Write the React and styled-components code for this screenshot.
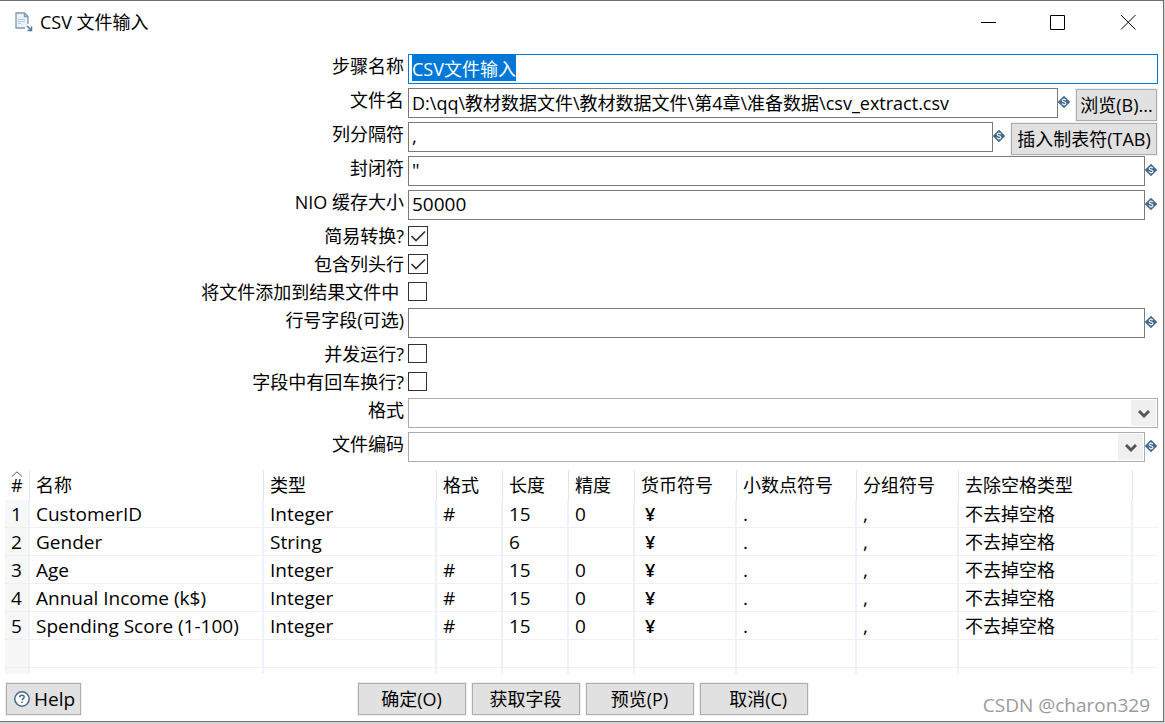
import React, { useEffect, useRef } from 'react';
import styled, { createGlobalStyle, css } from 'styled-components';

const columns = [
  { title: '#', width: 25 },
  { title: '名称', width: 234 },
  { title: '类型', width: 173 },
  { title: '格式', width: 66 },
  { title: '长度', width: 66 },
  { title: '精度', width: 66 },
  { title: '货币符号', width: 102 },
  { title: '小数点符号', width: 120 },
  { title: '分组符号', width: 102 },
  { title: '去除空格类型', width: 174 },
  { title: '', width: 0 },
];

const fields = [
  ['1', 'CustomerID', 'Integer', '#', '15', '0', '¥', '.', ',', '不去掉空格', ''],
  ['2', 'Gender', 'String', '', '6', '', '¥', '.', ',', '不去掉空格', ''],
  ['3', 'Age', 'Integer', '#', '15', '0', '¥', '.', ',', '不去掉空格', ''],
  ['4', 'Annual Income (k$)', 'Integer', '#', '15', '0', '¥', '.', ',', '不去掉空格', ''],
  ['5', 'Spending Score (1-100)', 'Integer', '#', '15', '0', '¥', '.', ',', '不去掉空格', ''],
  ['', '', '', '', '', '', '', '', '', '', ''],
];

// Open Sans runs a little narrow beside the CJK face
const isLatin = (text) => /^[ -~]*$/.test(text);

const VariableIcon = () => (
  <IconSlot>
    <svg width="12" height="12" viewBox="0 0 12 12" aria-hidden="true">
      <path d="M6 .7 11.300 6 6 11.300.7 6Z" fill="#44698a" stroke="#44698a" strokeWidth="1.400" strokeLinejoin="round" />
      <path
        d="M7.900 4.300C7.500 3.500 6.900 3.300 6 3.300c-1.100 0-1.800.5-1.800 1.300C4.200 6.300 7.900 5.600 7.900 7.400c0 .8-.8 1.300-1.900 1.300-1 0-1.700-.3-2.100-1.100M6 2.200v1M6 8.700v1"
        fill="none"
        stroke="#dfe8ef"
        strokeWidth="1.200"
      />
    </svg>
  </IconSlot>
);

const FileIcon = () => (
  <svg width="18" height="20" viewBox="0 0 18 20" aria-hidden="true">
    <path d="M1 1h8.500L13 4.500V11l-2 5H1Z" fill="#eaf1f7" />
    <path d="M10 16H1V1h8.500L13 4.500V12M9.500 1v3.500H13" fill="none" stroke="#7c9ab2" strokeWidth="1.300" />
    <path d="M3 7.500h7M3 9.500h7M3 11.500h3" stroke="#b5c9d8" />
    <path d="M12 14l4 4M16.500 14.500V18.500h-4" fill="none" stroke="#55799a" strokeWidth="1.500" />
  </svg>
);

const HelpIcon = () => (
  <svg width="16" height="16" viewBox="0 0 16 16" aria-hidden="true">
    <circle cx="8" cy="8" r="7.200" fill="#fff" stroke="#44698a" strokeWidth="1.500" />
    <path
      d="M5.800 6.300c0-1.300.9-2.100 2.200-2.100s2.200.8 2.200 1.900c0 1.500-2 1.600-2 3.200M8.100 10.500v1.500"
      fill="none"
      stroke="#44698a"
      strokeWidth="1.500"
    />
  </svg>
);

function Field({ id, label, value = '', variable, button, buttonWidth, inputRef, focused }) {
  return (
    <FieldRow>
      <Label htmlFor={id}>{label}</Label>
      <Control>
        <TextInput
          id={id}
          ref={inputRef}
          defaultValue={value}
          $focused={focused}
          $latin={isLatin(value)}
          spellCheck={false}
        />
        {variable && <VariableIcon />}
        {button && (
          <SideButton type="button" $width={buttonWidth}>
            {button}
          </SideButton>
        )}
      </Control>
    </FieldRow>
  );
}

function Check({ id, label, checked }) {
  return (
    <CheckRow>
      <Label htmlFor={id}>{label}</Label>
      <CheckBox id={id} type="checkbox" defaultChecked={checked} />
    </CheckRow>
  );
}

function Choice({ id, label, variable }) {
  return (
    <FieldRow>
      <Label htmlFor={id}>{label}</Label>
      <Control>
        <SelectBox>
          <Select id={id} defaultValue="">
            <option value=""></option>
          </Select>
          <Arrow>
            <svg width="12" height="10" viewBox="0 0 12 10" aria-hidden="true">
              <path d="M1 2 6 7l5-5" fill="none" stroke="#555" strokeWidth="3" />
            </svg>
          </Arrow>
        </SelectBox>
        {variable && <VariableIcon />}
      </Control>
    </FieldRow>
  );
}

function App() {
  const nameRef = useRef();

  useEffect(() => {
    nameRef.current.focus();
    nameRef.current.select();
  }, []);

  return (
    <>
      <GlobalStyle />
      <Dialog>
        <TitleBar>
          <FileIcon />
          <Title>CSV 文件输入</Title>
          <WindowButton type="button" aria-label="最小化">
            <svg width="16" height="16" viewBox="0 0 16 16">
              <path d="M1 8.500h15" stroke="#000" />
            </svg>
          </WindowButton>
          <WindowButton type="button" aria-label="最大化">
            <svg width="16" height="16" viewBox="0 0 16 16">
              <path d="M.5 1.500h14v14H.5Z" fill="none" stroke="#000" />
            </svg>
          </WindowButton>
          <WindowButton type="button" aria-label="关闭">
            <svg width="16" height="16" viewBox="0 0 16 16">
              <path d="M1 1l14.500 14.500M15.500 1 1 15.500" stroke="#000" />
            </svg>
          </WindowButton>
        </TitleBar>

        <Form>
          <Field id="step" label="步骤名称" value="CSV文件输入" inputRef={nameRef} focused />
          <Field
            id="file"
            label="文件名"
            value="D:\qq\教材数据文件\教材数据文件\第4章\准备数据\csv_extract.csv"
            variable
            button="浏览(B)..."
            buttonWidth={81}
          />
          <Field id="delimiter" label="列分隔符" value="," variable button="插入制表符(TAB)" buttonWidth={146} />
          <Field id="enclosure" label="封闭符" value={'"'} variable />
          <Field id="buffer" label="NIO 缓存大小" value="50000" variable />
          <Check id="lazy" label="简易转换?" checked />
          <Check id="header" label="包含列头行" checked />
          <Check id="result" label={'将文件添加到结果文件中 '} />
          <Field id="rownum" label="行号字段(可选)" variable />
          <Check id="parallel" label="并发运行?" />
          <Check id="newline" label="字段中有回车换行?" />
          <Choice id="format" label="格式" />
          <Choice id="encoding" label="文件编码" variable />
        </Form>

        <TableArea>
          <Table>
            <colgroup>
              {columns.map((col, i) => (
                <Col key={i} $width={col.width} />
              ))}
            </colgroup>
            <thead>
              <tr>
                {columns.map((col, i) => (
                  <HeadCell key={i}>
                    {i === 0 && (
                      <SortMark width="12" height="6" viewBox="0 0 12 6">
                        <path d="M1 5.500 6 .8l5 4.700" fill="none" stroke="#555" />
                      </SortMark>
                    )}
                    {col.title}
                  </HeadCell>
                ))}
              </tr>
            </thead>
            <tbody>
              {fields.map((row, r) => (
                <tr key={r}>
                  {row.map((cell, c) => (
                    <Cell key={c} $index={c === 0} $latin={isLatin(cell)}>
                      {cell === '¥' ? <Yen>{cell}</Yen> : cell}
                    </Cell>
                  ))}
                </tr>
              ))}
              <tr>
                {columns.map((col, i) => (
                  <Cell key={i} $index={i === 0} $last />
                ))}
              </tr>
            </tbody>
          </Table>
        </TableArea>

        <Footer>
          <HelpButton type="button">
            <HelpIcon />
            Help
          </HelpButton>
          <Actions>
            <ActionButton type="button">确定(O)</ActionButton>
            <ActionButton type="button">获取字段</ActionButton>
            <ActionButton type="button">预览(P)</ActionButton>
            <ActionButton type="button">{'  取消(C)'}</ActionButton>
          </Actions>
          <Watermark>CSDN @charon329</Watermark>
        </Footer>
      </Dialog>
    </>
  );
}

const GlobalStyle = createGlobalStyle`
  * {
    box-sizing: border-box;
  }

  body {
    margin: 0;
    background-color: #d4d4d4;
    color: #000;
    overflow: hidden;
  }

  body, button, input, select {
    font-family: 'Open Sans', 'Noto Sans CJK SC', sans-serif;
    font-size: 18px;
    line-height: 24px;
  }
`;

const Dialog = styled.main`
  margin-right: 1px;
  border: solid #707070;
  border-width: 1px 1px 1px 0;
  background-color: #fff;
`;

const TitleBar = styled.header`
  display: flex;
  align-items: center;
  height: 53px;
  padding: 0 0 11px 15px;
`;

const Title = styled.h1`
  flex: 1;
  margin: 0;
  padding-left: 7px;
  font-size: 18px;
  font-weight: 400;
`;

const WindowButton = styled.button`
  width: 70px;
  height: 40px;
  padding: 0;
  border: 0;
  background: none;
  line-height: 0;
`;

const Form = styled.form`
  padding: 0 5px 4px 0;
`;

const FieldRow = styled.div`
  display: grid;
  grid-template-columns: 404px 1fr;
  column-gap: 4px;
  height: 34px;
`;

const CheckRow = styled(FieldRow)`
  height: 28px;
`;

const Label = styled.label`
  text-align: right;
  white-space: pre;
`;

const Control = styled.div`
  display: flex;
  align-items: flex-start;
`;

const TextInput = styled.input`
  flex: 1;
  min-width: 0;
  height: 30px;
  padding: 0 3px 2px;
  border: 1px solid ${({ $focused }) => ($focused ? '#0078d7' : '#7a7a7a')};
  outline: none;
  background-color: #fff;
  color: #000;
  font-size: ${({ $latin }) => ($latin ? '19px' : '18px')};

  &::selection {
    background-color: #0078d7;
    color: #fff;
  }
`;

const IconSlot = styled.span`
  display: flex;
  width: 13px;
  padding-top: 8px;
`;

const buttonLook = css`
  border: 1px solid #adadad;
  background-color: #e1e1e1;
  box-shadow: 0 0 0 1px #f0f0f0;
  color: #000;
  white-space: pre;
`;

const SideButton = styled.button`
  ${buttonLook}
  width: ${({ $width }) => $width}px;
  height: 32px;
  margin: 1px 1px 0 5px;
  padding: 0;
`;

const CheckBox = styled.input`
  appearance: none;
  width: 19px;
  height: 19px;
  margin: 2px 0 0;
  border: 1px solid #333;
  background-color: #fff;

  &:checked {
    width: 20px;
    height: 20px;
    background-image: url("data:image/svg+xml,%3Csvg xmlns='http://www.w3.org/2000/svg' viewBox='0 0 18 18'%3E%3Cpath d='M2.500 9l4.500 4.500 9-9' fill='none' stroke='%23333' stroke-width='1.700'/%3E%3C/svg%3E");
  }
`;

const SelectBox = styled.div`
  position: relative;
  flex: 1;
`;

const Select = styled.select`
  display: block;
  appearance: none;
  width: 100%;
  height: 30px;
  border: 1px solid #abadb3;
  border-radius: 0;
  background-color: #fff;
`;

const Arrow = styled.span`
  position: absolute;
  top: 2px;
  right: 2px;
  display: flex;
  align-items: center;
  justify-content: center;
  width: 25px;
  height: 26px;
  padding-top: 1px;
  background-color: #f0f0f0;
  pointer-events: none;
`;

const TableArea = styled.div`
  padding: 0 5px;
`;

const Table = styled.table`
  width: 100%;
  table-layout: fixed;
  border-collapse: separate;
  border-spacing: 0;
`;

const Col = styled.col`
  width: ${({ $width }) => ($width ? `${$width}px` : 'auto')};
`;

const HeadCell = styled.th`
  position: relative;
  height: 30px;
  padding: 0 0 0 6px;
  border-right: 1px solid #e5e5e5;
  font-weight: 400;
  text-align: left;
  white-space: nowrap;

  &:last-child {
    border-right: 0;
  }
`;

const SortMark = styled.svg`
  position: absolute;
  top: 1px;
  left: 6px;
`;

const Cell = styled.td`
  height: ${({ $last }) => ($last ? '6px' : '28px')};
  padding: 0 0 0 6px;
  border-right: 2px solid #edf1fa;
  border-bottom: ${({ $last }) => ($last ? '0' : '1px solid #f0f0f0')};
  background-color: ${({ $index }) => ($index ? '#f7f7f7' : '#fff')};
  font-size: ${({ $latin }) => ($latin ? '19px' : '18px')};
  white-space: nowrap;

  &:last-child {
    border-right: 0;
  }
`;

const Yen = styled.span`
  padding-left: 4px;
  font-weight: 600;
`;

const Footer = styled.footer`
  display: grid;
  grid-template-columns: 1fr auto 1fr;
  align-items: center;
  height: 47px;
  padding: 3px 4px 0 6px;
`;

const HelpButton = styled.button`
  ${buttonLook}
  display: flex;
  align-items: center;
  justify-self: start;
  gap: 4px;
  height: 32px;
  padding: 0 5px 0 7px;
  font-size: 19px;
`;

const Actions = styled.div`
  display: flex;
  gap: 6px;
`;

const ActionButton = styled.button`
  ${buttonLook}
  width: 108px;
  height: 32px;
  padding: 0;
`;

const Watermark = styled.span`
  justify-self: end;
  padding: 12px 9px 0 0;
  color: #9a9a9a;
  font-size: 19px;
`;

export default App;
